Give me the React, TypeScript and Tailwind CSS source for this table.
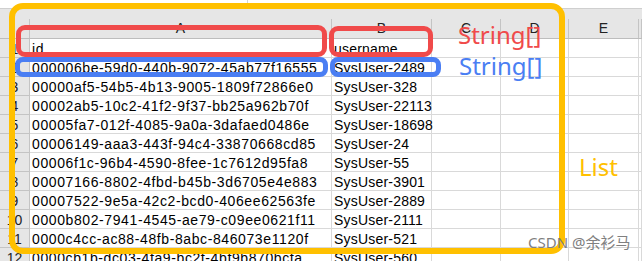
import * as React from 'react'

const COLS = 'grid grid-cols-[30px_302px_100px_69px_68px_70px_1fr]'

const rows: [string, string][] = [
  ['id', 'username'],
  ['000006be-59d0-440b-9072-45ab77f16555', 'SysUser-2489'],
  ['00000af5-54b5-4b13-9005-1809f72866e0', 'SysUser-328'],
  ['00002ab5-10c2-41f2-9f37-bb25a962b70f', 'SysUser-22113'],
  ['00005fa7-012f-4085-9a0a-3dafaed0486e', 'SysUser-18698'],
  ['00006149-aaa3-443f-94c4-33870668cd85', 'SysUser-24'],
  ['00006f1c-96b4-4590-8fee-1c7612d95fa8', 'SysUser-55'],
  ['00007166-8802-4fbd-b45b-3d6705e4e883', 'SysUser-3901'],
  ['00007522-9e5a-42c2-bcd0-406ee62563fe', 'SysUser-2889'],
  ['0000b802-7941-4545-ae79-c09ee0621f11', 'SysUser-2111'],
  ['0000c4cc-ac88-48fb-8abc-846073e1120f', 'SysUser-521'],
  ['0000cb1b-dc03-4fa9-bc2f-4bf9b870bcfa', 'SysUser-560'],
]

function HeaderCell({ label }: { label?: string }) {
  return (
    <div className="flex flex-col pt-[10px]">
      <div className="flex flex-1 items-center justify-center border-r border-[#c4c4c4] text-[14px] leading-[19px] text-[#222]">
        {label}
      </div>
    </div>
  )
}

function Cell({ children, className = '' }: { children?: React.ReactNode; className?: string }) {
  return (
    <div
      className={`flex items-end whitespace-nowrap border-b border-r border-[#d9d9d9] pl-[2px] text-[14px] leading-[16px] text-black ${className}`}
    >
      {children}
    </div>
  )
}

export default function App() {
  return (
    <div className="relative h-[261px] w-[642px] overflow-hidden bg-white font-['Liberation_Sans',Arial,sans-serif]">
      {/* formula bar edge */}
      <div className="flex h-[9px] border-b border-[#cfcfcf]">
        <div className="w-[248px] border-r border-[#d4d4d4]" />
      </div>

      {/* column headers */}
      <div className={`${COLS} h-[30px] border-b border-[#bdbdbd] bg-[#e6e6e6]`}>
        <HeaderCell />
        <HeaderCell label="A" />
        <HeaderCell label="B" />
        <HeaderCell label="C" />
        <HeaderCell label="D" />
        <HeaderCell label="E" />
        <HeaderCell />
      </div>

      {rows.map(([id, name], i) => (
        <div key={i} className={`${COLS} h-[19px]`}>
          <div className="flex items-end justify-center border-b border-r border-[#c4c4c4] bg-[#e6e6e6] text-[14px] leading-[16px] text-[#222]">
            {i + 1}
          </div>
          <Cell className="tracking-[0.6px]">{id}</Cell>
          <Cell className="tracking-[0.2px]">{name}</Cell>
          <Cell />
          <Cell />
          <Cell />
          <Cell />
        </div>
      ))}

      {/* annotations */}
      <div className="absolute left-[9px] top-[3px] h-[251px] w-[556px] rounded-[14px] border-[6px] border-[#ffc000]" />
      <div className="absolute left-[16px] top-[25px] h-[32px] w-[311px] rounded-[9px] border-[5px] border-[#f04a4a]" />
      <div className="absolute left-[329px] top-[26px] h-[31px] w-[104px] rounded-[9px] border-[5px] border-[#f04a4a]" />
      <div className="absolute left-[15px] top-[57px] h-[20px] w-[313px] rounded-[8px] border-[5px] border-[#4a7ef3]" />
      <div className="absolute left-[330px] top-[57px] h-[20px] w-[111px] rounded-[8px] border-[5px] border-[#4a7ef3]" />

      <div className="absolute left-[458px] top-[23px] font-['Noto_Sans',sans-serif] text-[24px] leading-[24px] text-[#f04a4a]">
        String[]
      </div>
      <div className="absolute left-[459px] top-[54px] font-['Noto_Sans',sans-serif] text-[24px] leading-[24px] text-[#4a7ef3]">
        String[]
      </div>
      <div className="absolute left-[579px] top-[155px] font-['Noto_Sans',sans-serif] text-[24px] leading-[24px] text-[#ffc000]">
        List
      </div>
      <div className="absolute left-[528px] top-[235px] font-['Noto_Sans','Noto_Sans_CJK_SC',sans-serif] text-[15px] leading-[15px] text-[#808080]">
        CSDN @余衫马
      </div>
    </div>
  )
}
